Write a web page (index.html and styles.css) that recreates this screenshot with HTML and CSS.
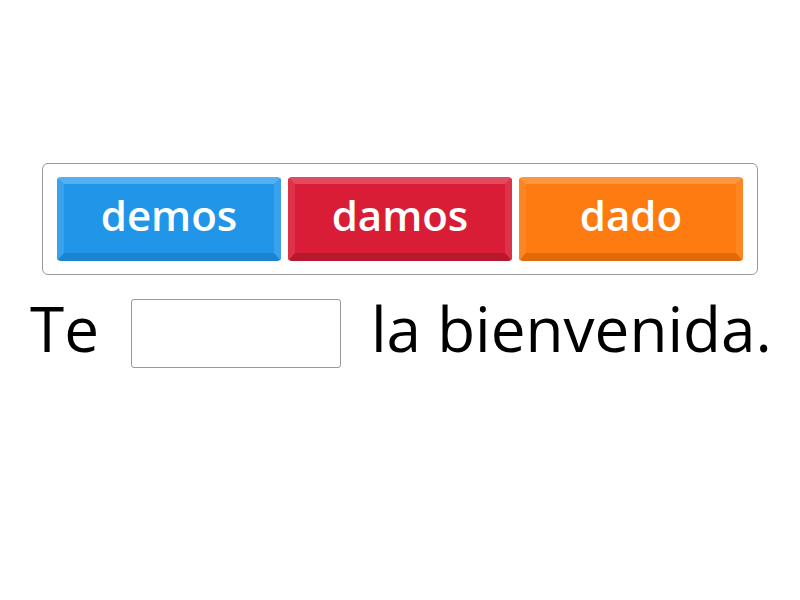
FILE: index.html
```html
<!DOCTYPE html>
<html>
<head>
<meta charset="utf-8">
<link rel="stylesheet" href="styles.css">
</head>
<body>
<div class="page">
  <div class="bank">
    <div class="tile blue">demos</div>
    <div class="tile red">damos</div>
    <div class="tile orange">dado</div>
  </div>
  <div class="sentence">
    <span class="word">Te</span>
    <span class="blank"></span>
    <span class="word">la bienvenida.</span>
  </div>
</div>
</body>
</html>
```
FILE: styles.css
```css
html, body {
  margin: 0;
  padding: 0;
  background: #ffffff;
}
.page {
  width: 800px;
  height: 600px;
  padding-top: 163px;
  box-sizing: border-box;
  font-family: "Open Sans", "Liberation Sans", sans-serif;
}
.bank {
  margin-left: 42px;
  width: 716px;
  height: 112px;
  box-sizing: border-box;
  border: 1px solid #999999;
  border-radius: 6px;
  padding: 13px 14px 13px 14px;
  display: flex;
  gap: 7px;
}
.tile {
  flex: 0 0 224px;
  height: 84px;
  box-sizing: border-box;
  border-radius: 4px;
  border-style: solid;
  border-width: 7px 7px 8px 7px;
  color: #ffffff;
  font-weight: 600;
  font-size: 42px;
  line-height: 1;
  display: flex;
  align-items: center;
  justify-content: center;
  padding-bottom: 8px;
}
.blue {
  background: #2196e8;
  border-color: #55b0f1 #3aa2ec #1a84d0 #3aa2ec;
}
.red {
  background: #d91d36;
  border-color: #e24a5f #dc3349 #b8182d #dc3349;
}
.orange {
  background: #fd7b10;
  border-color: #fd9640 #fd8624 #e26a06 #fd8624;
}
.sentence {
  display: flex;
  align-items: flex-start;
  margin-top: 24px;
  margin-left: 30px;
  font-size: 62px;
  color: #000000;
}
.word {
  line-height: 58px;
}
.blank {
  width: 210px;
  height: 69px;
  box-sizing: border-box;
  border: 1px solid #999999;
  border-radius: 3px;
  margin: 0 30px 0 32px;
}
```
